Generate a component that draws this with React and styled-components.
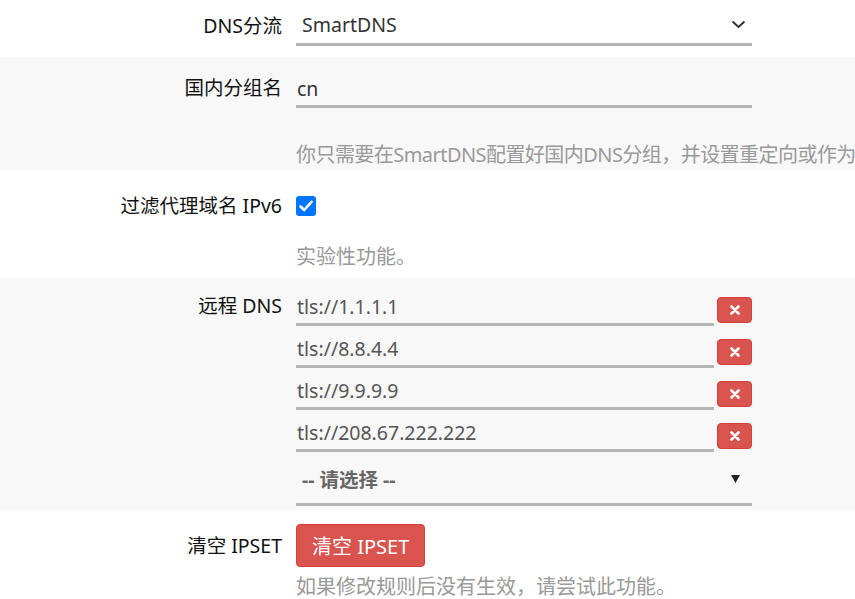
import React from 'react'
import styled, { createGlobalStyle } from 'styled-components'

const GlobalStyle = createGlobalStyle`
html, body {
  margin: 0;
  padding: 0;
  background: #ffffff;
  overflow: hidden;
}
body {
  font-family: "Noto Sans", "Noto Sans CJK SC", sans-serif;
  font-size: 19.5px;
  color: #111111;
}
`

const Page = styled.div`
width: 855px;
overflow: hidden;
`

const Row = styled.div`
display: grid;
grid-template-columns: 282px 456px;
column-gap: 14px;
align-items: start;
background: ${p => (p.$alt ? '#f8f8f8' : '#ffffff')};
padding: ${p => p.$pad || '11px 0'};
`

const Label = styled.div`
text-align: right;
white-space: nowrap;
line-height: ${p => p.$h || 40}px;
color: #111111;
`

const Field = styled.div`
display: flex;
flex-direction: column;
min-width: 0;
`

const Line = styled.div`
box-sizing: border-box;
height: ${p => p.$h || 40}px;
flex-shrink: 0;
display: flex;
align-items: center;
justify-content: space-between;
padding: 0 6px 0 6px;
border-bottom: 3px solid #b5b5b5;
color: ${p => p.$color || '#333333'};
font-weight: ${p => (p.$bold ? 700 : 400)};
`

const TextInput = styled.div`
box-sizing: border-box;
width: 100%;
min-width: 0;
height: 40px;
flex-shrink: ${p => (p.$inList ? 1 : 0)};
display: flex;
align-items: center;
padding: 3px 0 0 1px;
border-bottom: 3px solid #b5b5b5;
color: ${p => p.$color || '#333333'};
`

const ListItem = styled.div`
display: flex;
gap: 3px;
margin-bottom: 2px;
`

const RemoveButton = styled.button`
box-sizing: border-box;
flex-shrink: 0;
align-self: flex-end;
width: 35px;
height: 26px;
margin-bottom: 3px;
padding: 0;
border: 1px solid #d43f3a;
border-radius: 4px;
background: #d9534f;
display: flex;
align-items: center;
justify-content: center;
`

const Help = styled.div`
white-space: nowrap;
font-size: 20px;
letter-spacing: ${p => (p.$tight ? '-0.55px' : '0')};
line-height: 30px;
color: #999999;
margin-top: ${p => p.$mt || 0}px;
`

const CheckWrap = styled.div`
height: 30px;
display: flex;
align-items: center;
`

const CheckBox = styled.span`
width: 20px;
height: 20px;
border-radius: 3px;
background: #0075ff;
display: flex;
align-items: center;
justify-content: center;
`

const DangerButton = styled.button`
box-sizing: border-box;
align-self: flex-start;
height: 43px;
padding: 0 15px;
border: 1px solid #d43f3a;
border-radius: 4px;
background: #d9534f;
color: #ffffff;
font-family: inherit;
font-size: 20px;
`

const Chevron = () => (
  <svg width="15" height="9" viewBox="0 0 15 9">
    <path d="M1.5 1.5 L7.5 7 L13.5 1.5" fill="none" stroke="#333" strokeWidth="2" />
  </svg>
)

const Caret = () => (
  <svg width="9" height="8" viewBox="0 0 9 8" style={{ marginRight: 6 }}>
    <path d="M0 0 H9 L4.5 8 Z" fill="#222" />
  </svg>
)

const Cross = () => (
  <svg width="10" height="10" viewBox="0 0 10 10">
    <path d="M1.5 1.5 L8.5 8.5 M8.5 1.5 L1.5 8.5" stroke="#fff" strokeWidth="2.6" strokeLinecap="round" />
  </svg>
)

const Tick = () => (
  <svg width="14" height="12" viewBox="0 0 14 12">
    <path d="M1.5 6.5 L5.2 10 L12.5 1.8" fill="none" stroke="#fff" strokeWidth="2.6" strokeLinecap="round" strokeLinejoin="round" />
  </svg>
)

const servers = ['tls://1.1.1.1', 'tls://8.8.4.4', 'tls://9.9.9.9', 'tls://208.67.222.222']

function App() {
  return (
    <Page>
      <GlobalStyle />

      <Row $pad="6px 0 11px">
        <Label>DNS分流</Label>
        <Field>
          <Line>
            <span>SmartDNS</span>
            <Chevron />
          </Line>
        </Field>
      </Row>

      <Row $alt $pad="11px 0 1px">
        <Label>国内分组名</Label>
        <Field>
          <TextInput>cn</TextInput>
          <Help $mt={32} $tight>你只需要在SmartDNS配置好国内DNS分组，并设置重定向或作为dnsmasq上游，此处填入分组名。</Help>
        </Field>
      </Row>

      <Row $pad="20px 0 5px">
        <Label $h={30}>过滤代理域名 IPv6</Label>
        <Field>
          <CheckWrap>
            <CheckBox>
              <Tick />
            </CheckBox>
          </CheckWrap>
          <Help $mt={21}>实验性功能。</Help>
        </Field>
      </Row>

      <Row $alt $pad="9px 0 4px">
        <Label>远程 DNS</Label>
        <Field>
          {servers.map(s => (
            <ListItem key={s}>
              <TextInput $inList $color="#555555">{s}</TextInput>
              <RemoveButton>
                <Cross />
              </RemoveButton>
            </ListItem>
          ))}
          <Line $h={52} $color="#666666" $bold>
            <span>-- 请选择 --</span>
            <Caret />
          </Line>
        </Field>
      </Row>

      <Row $pad="14px 0 10px">
        <Label $h={43}>清空 IPSET</Label>
        <Field>
          <DangerButton>清空 IPSET</DangerButton>
          <Help $mt={5}>如果修改规则后没有生效，请尝试此功能。</Help>
        </Field>
      </Row>
    </Page>
  )
}

export default App
